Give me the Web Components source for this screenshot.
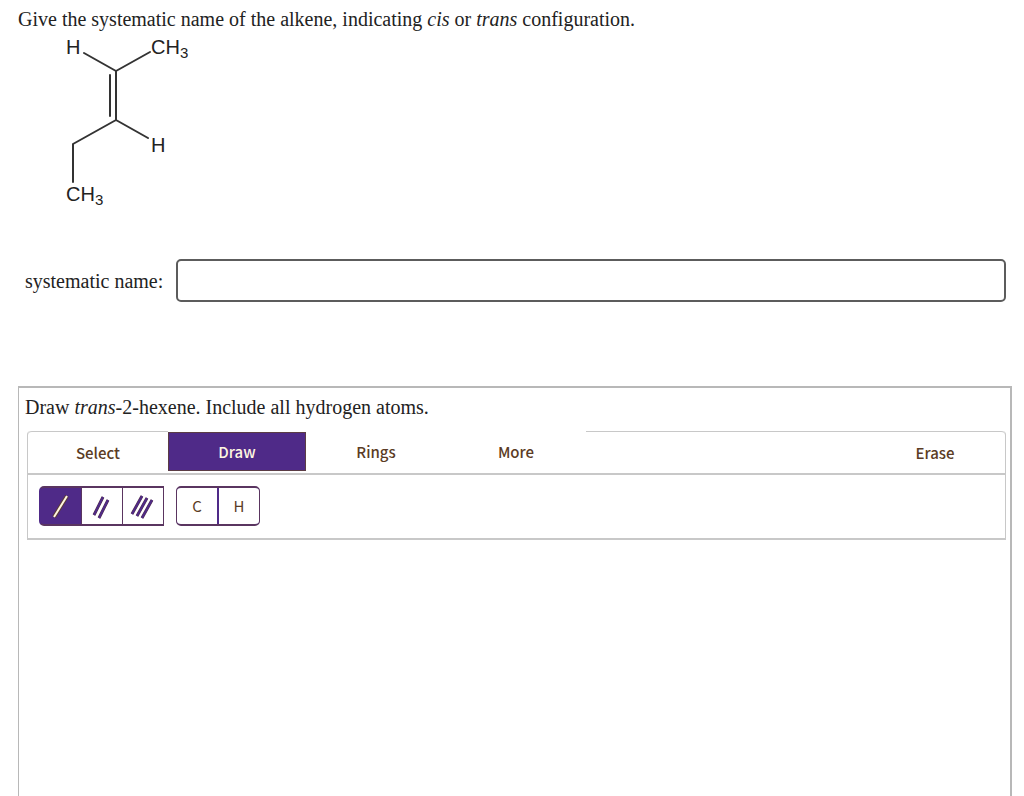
<!DOCTYPE html>
<html lang="en">
<head>
<meta charset="utf-8">
<title>Alkene nomenclature</title>
<style>
  body { margin: 0; background: #fff; color: #222; font: 20px/24px "Liberation Serif", "Times New Roman", serif; }
</style>
</head>
<body>
<alkene-exercise></alkene-exercise>
<script>
const define = (name, html, setup) => {
  const template = document.createElement('template');
  template.innerHTML = html;
  customElements.define(name, class extends HTMLElement {
    constructor() {
      super();
      this.attachShadow({ mode: 'open' }).append(template.content.cloneNode(true));
    }
    connectedCallback() { if (setup) setup(this, this.shadowRoot); }
  });
};

define('alkene-molecule', `
  <style>
    :host { display: block; }
    svg { display: block; }
    text { font: 20px "Liberation Sans", Arial, sans-serif; fill: #222; }
    .sub { font-size: 15px; }
    path { fill: none; stroke: #333; stroke-width: 2; stroke-linecap: round; stroke-linejoin: round; }
  </style>
  <svg width="160" height="180" viewBox="50 32 160 180" role="img" aria-label="Structure of the alkene">
    <path d="M84 53 116 71 150 52M116 71V120M110 75V116M116 120 148 138M116 120 73 144V182"/>
    <text x="66" y="54">H</text>
    <text x="151" y="54">CH<tspan class="sub" dy="4">3</tspan></text>
    <text x="151" y="152">H</text>
    <text x="66" y="201">CH<tspan class="sub" dy="4">3</tspan></text>
  </svg>`);

define('answer-field', `
  <style>
    :host { display: block; }
    div { display: flex; align-items: center; gap: 13px; }
    label { flex: none; }
    input { flex: 1; min-width: 0; height: 43px; box-sizing: border-box; padding: 0 10px; border: 2px solid #5c5c5c; border-radius: 5px; background: #fff; color: inherit; font: inherit; }
  </style>
  <div><label for="answer"><slot></slot></label><input id="answer" type="text"></div>`);

define('mode-tab', `
  <style>
    :host { display: block; width: 140px; flex: none; box-sizing: border-box; }
    :host([active]) { width: 138px; }
    :host([lined]) { border-top: 1px solid #c8c8c8; }
    :host(:not([lined])) { padding-top: 1px; }
    :host([first]) { border-top-left-radius: 4px; }
    :host([last]) { border-top-right-radius: 4px; }
    button { display: block; width: 100%; height: 39px; margin: 0; padding: 0; border: 0; background: none; color: #5b3c25; font: 500 15px/24px "Noto Sans CJK SC", sans-serif; }
    :host([lined]) button { height: 42px; }
    :host([active]) button { background: #4f2a88; border: 1px solid #5b3c45; color: #fff6e0; }
  </style>
  <button type="button"><slot></slot></button>`);

define('tool-button', `
  <style>
    :host { display: block; }
    button { display: flex; align-items: center; justify-content: center; width: 40px; height: 36px; margin: 0; padding: 0; border: 0; background: #fff; color: #5b3c25; font: 15px/24px "Noto Sans CJK SC", sans-serif; }
    :host([active]) button { background: #4f2a88; }
    svg { display: block; }
    path { fill: none; stroke: #55324a; stroke-width: 3; }
    .core { stroke: #4f2a88; stroke-width: 2; }
    :host([active]) path { stroke: #5b3c35; stroke-width: 4; }
    :host([active]) .core { stroke: #fff6e0; stroke-width: 2; }
  </style>
  <button type="button"><slot></slot></button>`, (host, root) => {
    const shapes = {
      1: 'M13 26 26 5',
      2: 'M12 24 21 6M17 27 26 9',
      3: 'M9 23 19 5M14 25 24 7M19 27 29 9'
    };
    const d = shapes[host.getAttribute('bond')];
    if (d) {
      const button = root.querySelector('button');
      button.setAttribute('aria-label', host.getAttribute('label'));
      button.innerHTML = `<svg width="40" height="30" viewBox="0 0 40 30"><path d="${d}"/><path class="core" d="${d}"/></svg>`;
    }
  });

define('tool-group', `
  <style>
    :host { display: flex; gap: 1px; box-sizing: border-box; overflow: hidden; border: 2px solid #5a3560; border-radius: 5px; background: #5a3560; }
    :host([bonds]) { border-radius: 5px 0 0 5px; border-right-width: 1px; border-left-color: #4f2a88; }
    :host([atoms]) { gap: 2px; border-width: 2px 1px; background: #4f2a88; }
  </style>
  <slot></slot>`);

define('drawing-toolbar', `
  <style>
    :host { display: block; }
    .modes { display: flex; align-items: flex-start; height: 42px; box-sizing: border-box; border: solid #c8c8c8; border-width: 0 1px; border-radius: 4px 4px 0 0; }
    .rest { flex: 1; border-top: 1px solid #c8c8c8; }
    .tools { display: flex; gap: 12px; padding: 11px 11px 12px; border: 1px solid #c8c8c8; border-width: 2px 1px; }
  </style>
  <div class="modes">
    <mode-tab lined first>Select</mode-tab>
    <mode-tab active>Draw</mode-tab>
    <mode-tab>Rings</mode-tab>
    <mode-tab>More</mode-tab>
    <div class="rest"></div>
    <mode-tab lined last>Erase</mode-tab>
  </div>
  <div class="tools">
    <tool-group bonds>
      <tool-button active bond="1" label="Single bond"></tool-button>
      <tool-button bond="2" label="Double bond"></tool-button>
      <tool-button bond="3" label="Triple bond"></tool-button>
    </tool-group>
    <tool-group atoms>
      <tool-button>C</tool-button>
      <tool-button>H</tool-button>
    </tool-group>
  </div>`);

define('drawing-panel', `
  <style>
    :host { display: block; box-sizing: border-box; padding: 7px 4px 0 8px; border: 2px solid #b8b8b8; border-width: 2px 2px 0 1px; }
    p { margin: 0 0 12px; text-indent: -2px; }
  </style>
  <p><slot></slot></p>
  <drawing-toolbar></drawing-toolbar>`);

define('alkene-exercise', `
  <style>
    :host { display: flex; flex-direction: column; min-height: 100vh; box-sizing: border-box; padding: 7px 12px 0 18px; }
    p { margin: 0; }
    alkene-molecule { padding: 1px 0 0 32px; }
    answer-field { margin: 47px 6px 84px 7px; }
    drawing-panel { flex: 1; }
  </style>
  <p>Give the systematic name of the alkene, indicating <i>cis</i> or <i>trans</i> configuration.</p>
  <alkene-molecule></alkene-molecule>
  <answer-field>systematic name:</answer-field>
  <drawing-panel>Draw <i>trans</i>-2-hexene. Include all hydrogen atoms.</drawing-panel>`);
</script>
</body>
</html>
